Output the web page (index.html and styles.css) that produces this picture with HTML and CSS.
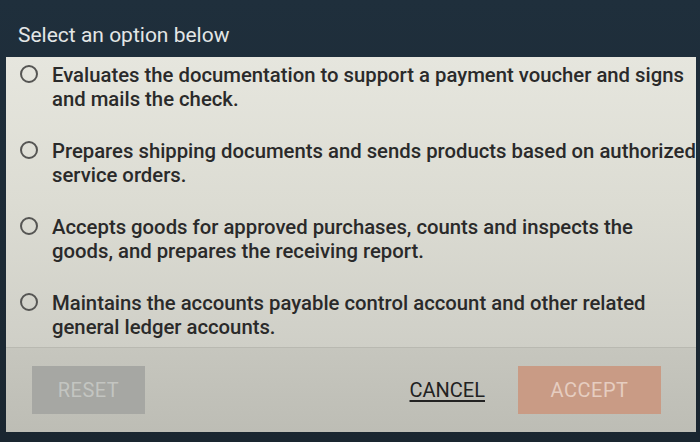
FILE: index.html
```html
<!DOCTYPE html>
<html>
<head>
<meta charset="utf-8">
<link rel="stylesheet" href="styles.css">
</head>
<body>
<div class="screen">
  <div class="header"><span class="title">Select an option below</span></div>
  <div class="panel">
    <div class="options">
      <div class="option"><span class="radio"></span><span class="label">Evaluates the documentation to support a payment voucher and signs<br>and mails the check.</span></div>
      <div class="option"><span class="radio"></span><span class="label">Prepares shipping documents and sends products based on authorized<br>service orders.</span></div>
      <div class="option"><span class="radio"></span><span class="label">Accepts goods for approved purchases, counts and inspects the<br>goods, and prepares the receiving report.</span></div>
      <div class="option"><span class="radio"></span><span class="label">Maintains the accounts payable control account and other related<br>general ledger accounts.</span></div>
    </div>
    <div class="footer">
      <button class="btn reset">RESET</button>
      <span class="spacer"></span>
      <button class="link cancel">CANCEL</button>
      <button class="btn accept">ACCEPT</button>
    </div>
  </div>
</div>
</body>
</html>
```
FILE: styles.css
```css
html, body {
  margin: 0;
  padding: 0;
  background: #1b2731;
}
.screen {
  width: 700px;
  height: 442px;
  overflow: hidden;
  display: flex;
  flex-direction: column;
  font-family: Roboto, "Liberation Sans", sans-serif;
  background: linear-gradient(180deg, #1f2f3c 0%, #1a2630 100%);
}
.header {
  height: 57px;
  display: flex;
  align-items: flex-end;
  padding-left: 18px;
  box-sizing: border-box;
  padding-bottom: 9px;
}
.title {
  color: #e3e6e6;
  font-size: 21px;
  line-height: 26px;
}
.panel {
  margin: 0 4px 10px 6px;
  display: flex;
  flex-direction: column;
  flex: 1;
  overflow: hidden;
}
.options {
  background: linear-gradient(180deg, #e6e6de 0%, #dcdcd3 50%, #cfcfc7 100%);
  padding: 6px 0 8px 14px;
  display: flex;
  flex-direction: column;
  gap: 28px;
  border-bottom: 1px solid #b9b9b1;
}
.option {
  display: flex;
  align-items: flex-start;
  gap: 14px;
}
.radio {
  flex: none;
  width: 14px;
  height: 14px;
  border: 2px solid #555553;
  border-radius: 50%;
  margin-top: 2px;
}
.label {
  color: #2a2a2a;
  font-size: 20.3px;
  line-height: 24px;
  font-weight: 500;
  white-space: nowrap;
}
.footer {
  flex: 1;
  background: linear-gradient(180deg, #c6c6be 0%, #bdbdb5 100%);
  display: flex;
  align-items: center;
  padding: 0 35px 0 26px;
}
.btn {
  border: none;
  font-family: Roboto, "Liberation Sans", sans-serif;
  font-size: 20px;
  height: 48px;
  letter-spacing: 0.5px;
}
.reset {
  width: 113px;
  background: #a6a7a3;
  color: #c3c5c1;
}
.spacer {
  flex: 1;
}
.link {
  background: none;
  border: none;
  padding: 0;
  font-family: Roboto, "Liberation Sans", sans-serif;
  font-size: 20px;
  color: #222;
  text-decoration: underline;
  text-underline-offset: 3px;
}
.cancel {
  margin-right: 33px;
}
.accept {
  width: 143px;
  background: #c99b85;
  color: #e6cdc0;
}
```
